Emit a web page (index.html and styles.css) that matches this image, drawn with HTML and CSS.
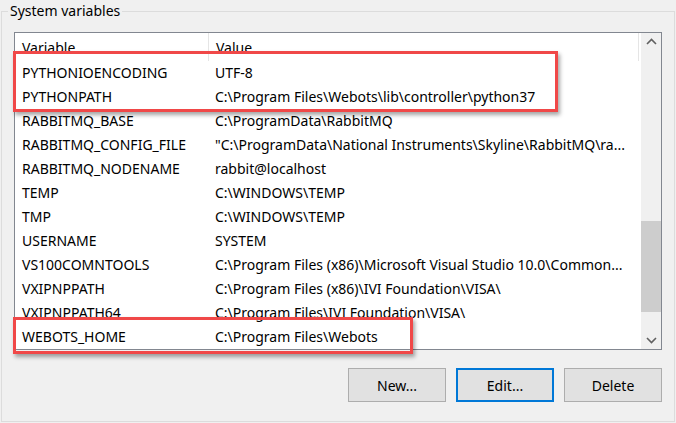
FILE: index.html
```html
<!DOCTYPE html>
<html lang="en">
<head>
  <meta charset="UTF-8" />
  <title>System variables</title>
  <link rel="stylesheet" href="styles.css">
</head>
<body>
  <fieldset class="group">
    <legend>System variables</legend>

    <div class="list">
      <div class="table">
        <div class="row head">
          <div class="cell name">Variable</div>
          <div class="cell value">Value</div>
        </div>
        <div class="row"><div class="cell name">PYTHONIOENCODING</div><div class="cell value">UTF-8</div></div>
        <div class="row"><div class="cell name">PYTHONPATH</div><div class="cell value">C:\Program Files\Webots\lib\controller\python37</div></div>
        <div class="row"><div class="cell name">RABBITMQ_BASE</div><div class="cell value">C:\ProgramData\RabbitMQ</div></div>
        <div class="row"><div class="cell name">RABBITMQ_CONFIG_FILE</div><div class="cell value">"C:\ProgramData\National Instruments\Skyline\RabbitMQ\ra...</div></div>
        <div class="row"><div class="cell name">RABBITMQ_NODENAME</div><div class="cell value">rabbit@localhost</div></div>
        <div class="row"><div class="cell name">TEMP</div><div class="cell value">C:\WINDOWS\TEMP</div></div>
        <div class="row"><div class="cell name">TMP</div><div class="cell value">C:\WINDOWS\TEMP</div></div>
        <div class="row"><div class="cell name">USERNAME</div><div class="cell value">SYSTEM</div></div>
        <div class="row"><div class="cell name">VS100COMNTOOLS</div><div class="cell value">C:\Program Files (x86)\Microsoft Visual Studio 10.0\Common...</div></div>
        <div class="row"><div class="cell name">VXIPNPPATH</div><div class="cell value">C:\Program Files (x86)\IVI Foundation\VISA\</div></div>
        <div class="row"><div class="cell name">VXIPNPPATH64</div><div class="cell value">C:\Program Files\IVI Foundation\VISA\</div></div>
        <div class="row"><div class="cell name">WEBOTS_HOME</div><div class="cell value">C:\Program Files\Webots</div></div>
      </div>

      <div class="scrollbar">
        <div class="arrow">
          <svg width="11" height="7" viewBox="0 0 11 7"><path d="M1 6 L5.5 1.5 L10 6" fill="none" stroke="#606060" stroke-width="1.6"/></svg>
        </div>
        <div class="track"><div class="thumb"></div></div>
        <div class="arrow">
          <svg width="11" height="7" viewBox="0 0 11 7"><path d="M1 1 L5.5 5.5 L10 1" fill="none" stroke="#606060" stroke-width="1.6"/></svg>
        </div>
      </div>

      <!-- highlight marks drawn over the screenshot -->
      <div class="mark mark-python"></div>
      <div class="mark mark-webots"></div>
    </div>

    <div class="buttons">
      <button class="btn">New...</button>
      <button class="btn default">Edit...</button>
      <button class="btn">Delete</button>
    </div>
  </fieldset>
</body>
</html>
```

FILE: styles.css
```css
body {
  margin: 0;
  background: #f0f0f0;
  font-family: "Noto Sans", "Open Sans", sans-serif;
  font-size: 14px;
  color: #000;
}

.group {
  margin: 1px 0 0 1px;
  width: 674px;
  box-sizing: border-box;
  border: 1px solid #dcdcdc;
  padding: 11px 12px 19px 6px;
}

.group legend {
  padding: 0 2px;
  line-height: 20px;
  font-size: 14px;
}

.list {
  position: relative;
  margin-left: 6px;
  height: 318px;
  box-sizing: border-box;
  border: 1px solid #828790;
  background: #fff;
  display: flex;
}

.table {
  flex: 1;
  overflow: hidden;
}

.row {
  display: flex;
  height: 24px;
  align-items: center;
  white-space: nowrap;
  padding-bottom: 1px;
  box-sizing: border-box;
}

.row.head {
  height: 28px;
  align-items: stretch;
  padding-bottom: 0;
}

.head .cell {
  display: flex;
  align-items: center;
  border-right: 1px solid #e5e5e5;
}

.cell {
  padding-left: 7px;
  overflow: hidden;
}

.cell.name {
  width: 186px;
}

.cell.value {
  width: 422px;
}

.scrollbar {
  width: 20px;
  background: #f0f0f0;
  display: flex;
  flex-direction: column;
}

.arrow {
  height: 17px;
  display: flex;
  align-items: center;
  justify-content: center;
}

.track {
  flex: 1;
}

.thumb {
  margin-top: 171px;
  height: 91px;
  background: #cdcdcd;
}

.mark {
  position: absolute;
  left: -2px;
  border: 3px solid #f04848;
  box-shadow: 2px 3px 4px rgba(0, 0, 0, 0.35);
}

.mark-python {
  top: 18px;
  width: 539px;
  height: 55px;
}

.mark-webots {
  top: 284px;
  width: 394px;
  height: 31px;
}

.buttons {
  display: flex;
  justify-content: flex-end;
  gap: 10px;
  margin-top: 18px;
}

.btn {
  width: 98px;
  height: 34px;
  box-sizing: border-box;
  background: #e1e1e1;
  border: 1px solid #adadad;
  font-family: inherit;
  font-size: 14px;
  color: #000;
  padding: 0;
}

.btn.default {
  border: 2px solid #0078d7;
}
```
